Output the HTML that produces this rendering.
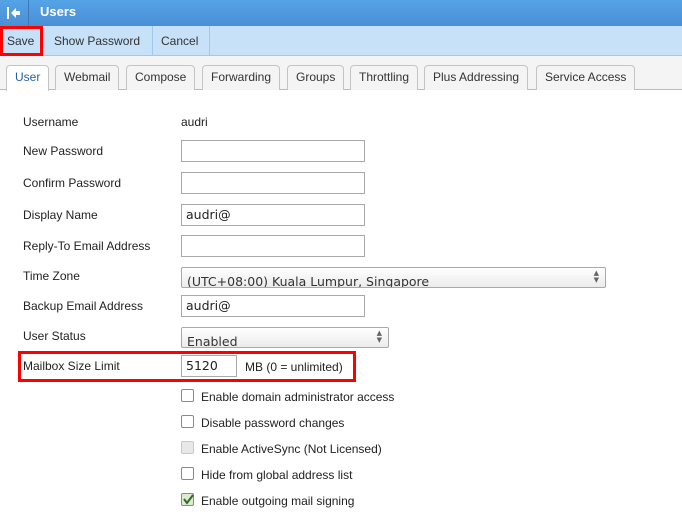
<!DOCTYPE html>
<html><head><style>
*{box-sizing:border-box;margin:0;padding:0}
body{width:682px;height:521px;overflow:hidden;background:#fff;font-family:"Liberation Sans",sans-serif;font-size:12px;color:#222;position:relative}
.abs{position:absolute}
#title{left:0;top:0;width:682px;height:26px;background:linear-gradient(#55a3e6,#4a8fd6)}
#title .ic{left:0;top:0;width:29px;height:26px;border-right:1px solid #3b78b8}
#title .t{left:40px;top:4px;color:#fff;font-weight:bold;font-size:13px}
#tb{left:0;top:26px;width:682px;height:30px;background:#c6e1f8;border-bottom:1px solid #9ec8ef}
.btn{position:absolute;top:0;height:29px;line-height:30px;font-size:12px;color:#333;border-right:1px solid #9ec8ef;padding:0 7px}
#tabs{left:0;top:56px;width:682px;height:34px;background:#f4f4f4;border-bottom:1px solid #bbb}
.tab{position:absolute;top:9px;height:25px;line-height:23px;border:1px solid #c4c4c4;border-bottom:none;border-radius:4px 4px 0 0;background:#f4f4f4;padding:0 8px;color:#333;font-size:12px}
.lbl{position:absolute;left:23px;font-size:12px;color:#222}
.in{position:absolute;left:181px;width:184px;height:22px;border:1px solid #a9a9a9;background:#fff;font-family:"DejaVu Sans",sans-serif;font-size:12.5px;padding:2px 4px;line-height:16px}
.sel{position:absolute;left:181px;height:21px;border:1px solid #a9a9a9;border-radius:2px;background:linear-gradient(#fff,#ececec);font-family:"DejaVu Sans",sans-serif;font-size:12.5px;padding:3px 5px;overflow:hidden;line-height:22px;color:#333}
.arr{position:absolute;right:6px;top:2px;font-size:7px;line-height:7px;color:#666}
.cb{position:absolute;left:181px;width:13px;height:13px;border:1px solid #8a8a8a;border-radius:2px;background:#fff}
.ct{position:absolute;left:201px;font-size:12px;color:#222}
</style></head><body>
<div id="title" class="abs"><div class="ic abs"><svg width="29" height="26"><rect x="7" y="7" width="2" height="12" fill="#fff"/><path d="M11 13 L16 8 L16 11 L20 11 L20 15 L16 15 L16 18 Z" fill="#fff"/></svg></div><div class="t abs">Users</div></div>
<div id="tb" class="abs">
<div class="btn" style="left:0;width:43px">Save</div>
<div class="btn" style="left:43px;width:110px;padding-left:11px">Show Password</div>
<div class="btn" style="left:153px;width:57px;padding-left:8px">Cancel</div>
</div>
<div class="abs" style="left:0;top:26px;width:43px;height:30px;border:3px solid #f00"></div>
<div id="tabs" class="abs">
<div class="tab" style="left:6px;background:#fff;height:26px;color:#2a5fa0">User</div>
<div class="tab" style="left:55px">Webmail</div>
<div class="tab" style="left:126px">Compose</div>
<div class="tab" style="left:202px">Forwarding</div>
<div class="tab" style="left:287px">Groups</div>
<div class="tab" style="left:350px">Throttling</div>
<div class="tab" style="left:424px">Plus Addressing</div>
<div class="tab" style="left:536px">Service Access</div>
</div>
<div class="lbl" style="top:115px">Username</div><div class="abs" style="left:181px;top:115px">audri</div>
<div class="lbl" style="top:144px">New Password</div><div class="in" style="top:140px"></div>
<div class="lbl" style="top:176px">Confirm Password</div><div class="in" style="top:172px"></div>
<div class="lbl" style="top:208px">Display Name</div><div class="in" style="top:204px">audri@</div>
<div class="lbl" style="top:239px">Reply-To Email Address</div><div class="in" style="top:235px"></div>
<div class="lbl" style="top:269px">Time Zone</div><div class="sel" style="top:267px;width:425px">(UTC+08:00) Kuala Lumpur, Singapore<div class="arr">▲<br>▼</div></div>
<div class="lbl" style="top:299px">Backup Email Address</div><div class="in" style="top:295px">audri@</div>
<div class="lbl" style="top:329px">User Status</div><div class="sel" style="top:327px;width:208px">Enabled<div class="arr">▲<br>▼</div></div>
<div class="lbl" style="top:359px">Mailbox Size Limit</div><div class="in" style="top:355px;width:56px">5120</div><div class="abs" style="left:245px;top:360px">MB (0 = unlimited)</div>
<div class="abs" style="left:18px;top:351px;width:338px;height:31px;border:3px solid #f00"></div>
<div class="cb" style="top:389px"></div><div class="ct" style="top:390px">Enable domain administrator access</div>
<div class="cb" style="top:415px"></div><div class="ct" style="top:416px">Disable password changes</div>
<div class="cb" style="top:441px;background:#e8e8e8;border-color:#c8c8c8"></div><div class="ct" style="top:442px">Enable ActiveSync (Not Licensed)</div>
<div class="cb" style="top:467px"></div><div class="ct" style="top:468px">Hide from global address list</div>
<div class="cb" style="top:493px;background:#dcead0"><svg width="13" height="13" style="position:absolute;left:-1px;top:-1px"><path d="M3 6 L6 10 L12 2" stroke="#2f6b2a" stroke-width="2" fill="none"/></svg></div><div class="ct" style="top:494px">Enable outgoing mail signing</div>
</body></html>
